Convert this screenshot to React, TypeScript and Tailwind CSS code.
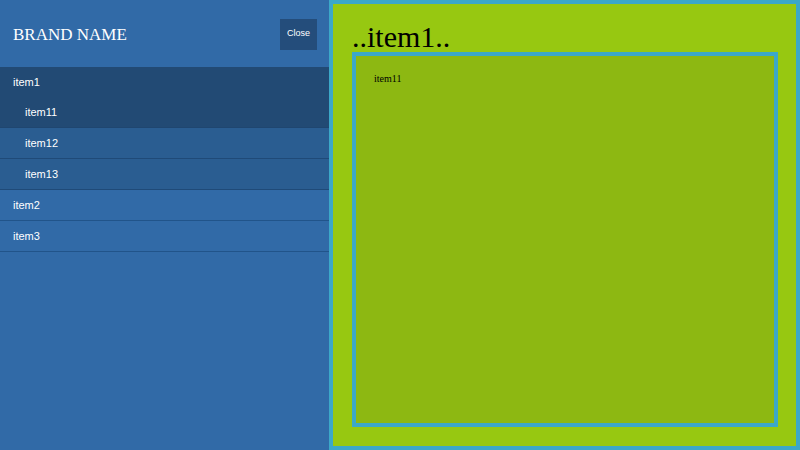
const sans = "font-['Liberation_Sans',Arial,sans-serif]";
const serif = "font-['Liberation_Serif','Times_New_Roman',serif]";

export default function App() {
  return (
    <div className="flex w-[800px] h-[450px] overflow-hidden">
      <aside className="w-[329px] shrink-0 bg-[#316aa7] text-white">
        <div className="h-[67px] flex items-center justify-between pl-[13px] pr-[12px] pt-[1px]">
          <span className={`${serif} text-[17px] leading-[17px]`}>BRAND NAME</span>
          <button className={`${sans} w-[37px] h-[31px] bg-[#244d7b] text-[9px] text-white`}>
            Close
          </button>
        </div>
        <ul className={`${sans} text-[11px] leading-[11px]`}>
          <li className="h-[30px] flex items-center pl-[13px] bg-[#224a74]">item1</li>
          <li className="h-[31px] flex items-center pl-[25px] bg-[#224a74] border-b border-[#1f4670]">
            item11
          </li>
          <li className="h-[31px] flex items-center pl-[25px] bg-[#2a5d91] border-b border-[#1f4a78]">
            item12
          </li>
          <li className="h-[31px] flex items-center pl-[25px] bg-[#2a5d91] border-b border-[#1f4a78]">
            item13
          </li>
          <li className="h-[31px] flex items-center pl-[13px] border-b border-[#21548a]">item2</li>
          <li className="h-[31px] flex items-center pl-[13px] border-b border-[#21548a]">item3</li>
        </ul>
      </aside>
      <main className="flex-1 flex flex-col border-4 border-[#3ca8c8] bg-[#97c811] pl-[19px] pr-[18px] pb-[19px]">
        <h1 className={`${serif} text-[30px] leading-[30px] pt-[18px] text-black`}>..item1..</h1>
        <div className="flex-1 border-4 border-[#3ca8c8] bg-[#8db812] pt-[18px] pl-[18px]">
          <p className={`${serif} text-[10px] leading-[10px] text-black`}>item11</p>
        </div>
      </main>
    </div>
  );
}
